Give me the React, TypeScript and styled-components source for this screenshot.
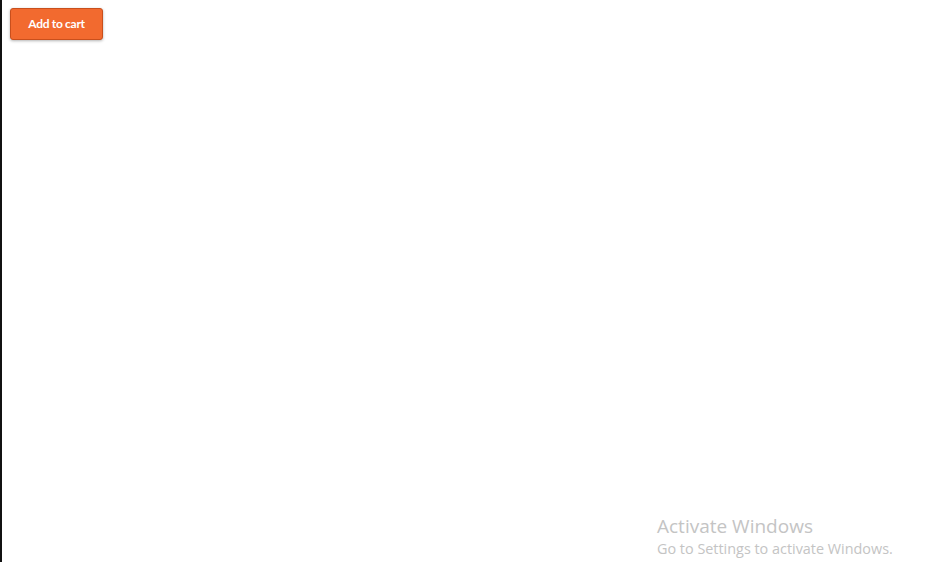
import React from "react"
import styled, { createGlobalStyle } from "styled-components"

const GlobalStyle = createGlobalStyle`
  html, body {
    margin: 0;
    padding: 0;
    background: #ffffff;
  }
  body {
    font-family: Lato, "Liberation Sans", sans-serif;
  }
`

const Page = styled.div`
  position: relative;
  box-sizing: border-box;
  height: 100vh;
  border-left: 2px solid #111111;
  padding: 8px 0 0 8px;
  overflow: hidden;
`

const CartButton = styled.button`
  box-sizing: border-box;
  width: 93px;
  height: 32px;
  background-color: #f26a2f;
  border: 1px solid #c94f1c;
  border-radius: 3px;
  box-shadow: 0 1px 3px rgba(0, 0, 0, 0.3);
  color: #ffffff;
  font-family: Lato, "Liberation Sans", sans-serif;
  font-weight: 700;
  font-size: 12px;
  letter-spacing: -0.3px;
  cursor: pointer;
  padding: 0 0 2px;
`

const Watermark = styled.div`
  position: absolute;
  left: 655px;
  top: 514px;
  color: #c4c4c4;
  font-family: "Open Sans", "Liberation Sans", sans-serif;
  pointer-events: none;
`

const WatermarkTitle = styled.div`
  font-size: 19px;
  line-height: 25px;
`

const WatermarkText = styled.div`
  font-size: 14.4px;
  line-height: 20px;
`

export default function App() {
  return (
    <>
      <GlobalStyle />
      <Page>
        <CartButton>Add to cart</CartButton>
        <Watermark>
          <WatermarkTitle>Activate Windows</WatermarkTitle>
          <WatermarkText>Go to Settings to activate Windows.</WatermarkText>
        </Watermark>
      </Page>
    </>
  )
}
